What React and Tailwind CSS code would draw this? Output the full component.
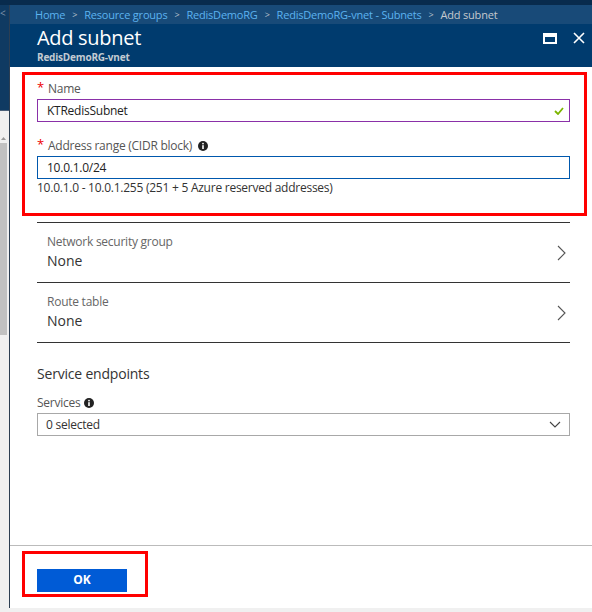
import { useState } from "react";

const font = { fontFamily: '"Open Sans", "Noto Sans", sans-serif' };

function InfoIcon() {
  return (
    <svg width="10" height="10" viewBox="0 0 10 10" className="inline-block">
      <circle cx="5" cy="5" r="5" fill="#222" />
      <rect x="4.2" y="4.2" width="1.6" height="3.8" fill="#fff" />
      <circle cx="5" cy="2.6" r="0.9" fill="#fff" />
    </svg>
  );
}

function Chevron() {
  return (
    <svg width="9" height="16" viewBox="0 0 9 16" fill="none">
      <path d="M1 1 L8 8 L1 15" stroke="#555" strokeWidth="1.1" />
    </svg>
  );
}

function Crumb({ children, last }) {
  return (
    <>
      <span className={last ? "text-[#c4c9ce]" : "text-[#5cb3f0]"}>{children}</span>
      {!last && <span className="text-[#b8c2cc] mx-[7px] text-[9px]">&gt;</span>}
    </>
  );
}

function PickerRow({ label, value }) {
  return (
    <div className="h-[60px] border-t border-[#333] pl-[10px] pr-[4px] flex items-center justify-between">
      <div className="flex flex-col">
        <span className="text-[12px] tracking-[-0.25px] text-[#666] leading-[16px]">{label}</span>
        <span className="text-[14px] text-[#333] leading-[20px] mt-[1px]">{value}</span>
      </div>
      <Chevron />
    </div>
  );
}

export default function App() {
  const [name, setName] = useState("KTRedisSubnet");
  const [range, setRange] = useState("10.0.1.0/24");

  return (
    <div className="w-[592px] h-[612px] flex flex-col bg-[#f0f0f0] overflow-hidden" style={font}>
      <div className="h-[5px] bg-[#082b4d] shrink-0" />
      <div className="flex flex-1 min-h-0">
        {/* left strip of the previous blade */}
        <div className="w-[9px] flex flex-col shrink-0">
          <div className="h-[105px] bg-[#0f3a62] flex flex-col">
            <span className="text-[#7d93a8] text-[10px] leading-none mt-[3px]">&lt;</span>
          </div>
          <div className="h-[1px] bg-[#4a6079]" />
          <div className="flex-1 bg-[#f0f0f0] flex flex-col pt-[24px]">
            <div className="w-[7px] h-[7px] flex items-center justify-center">
              <svg width="5" height="3" viewBox="0 0 5 3"><path d="M0 3 L2.5 0 L5 3Z" fill="#999" /></svg>
            </div>
            <div className="w-[7px] h-[192px] bg-[#c1c1c1] mt-[1px]" />
          </div>
        </div>

        {/* blade */}
        <div className="flex-1 flex flex-col border-l border-[#2c3e52] bg-white min-w-0 mb-[4px]">
          <div className="h-[19px] bg-[#184a78] flex items-center pl-[25px] text-[11px] tracking-[-0.2px] whitespace-nowrap leading-none">
            <Crumb>Home</Crumb>
            <Crumb>Resource groups</Crumb>
            <Crumb>RedisDemoRG</Crumb>
            <Crumb>RedisDemoRG-vnet - Subnets</Crumb>
            <Crumb last>Add subnet</Crumb>
          </div>
          <div className="h-[43px] bg-[#003b6e] flex justify-between pl-[27px] pr-[7px]">
            <div className="flex flex-col">
              <span className="text-white text-[20px] leading-[24px] mt-[2px] font-normal tracking-[-0.3px]">Add subnet</span>
              <span className="text-[#c3cbd3] text-[10px] font-bold leading-[12px] mt-[1px] tracking-[-0.2px]">RedisDemoRG-vnet</span>
            </div>
            <div className="flex items-start gap-[16px] pt-[8px]">
              <svg width="14" height="11" viewBox="0 0 14 11" className="mt-[1px]">
                <rect x="1" y="1" width="12" height="9" fill="none" stroke="#fff" strokeWidth="2" />
                <rect x="1" y="1" width="12" height="3" fill="#fff" />
              </svg>
              <svg width="12" height="12" viewBox="0 0 12 12">
                <path d="M1 1 L11 11 M11 1 L1 11" stroke="#fff" strokeWidth="1.6" />
              </svg>
            </div>
          </div>

          <div className="flex-1 flex flex-col">
            {/* highlighted name / range */}
            <div className="mt-[5px] ml-[12px] mr-[5px] h-[144px] border-[3px] border-[#ff0000] pl-[12px] pr-[14px] pt-[6px]">
              <div className="flex items-start text-[12px] tracking-[-0.25px] leading-[16px]">
                <span className="text-[#e00] text-[13px] leading-[12px] w-[11px]">*</span>
                <span className="text-[#555]">Name</span>
              </div>
              <div className="mt-[2px] h-[23px] border border-[#8a30a8] flex items-center pl-[9px] pr-[5px]">
                <input
                  value={name}
                  onChange={(e) => setName(e.target.value)}
                  className="flex-1 text-[12px] tracking-[-0.25px] text-[#222] outline-none bg-transparent"
                  style={font}
                />
                <svg width="10" height="8" viewBox="0 0 10 8">
                  <path d="M1 4 L4 7 L9 1" stroke="#7cb500" strokeWidth="1.8" fill="none" />
                </svg>
              </div>
              <div className="flex items-center text-[12px] tracking-[-0.25px] leading-[16px] mt-[16px]">
                <span className="text-[#e00] text-[13px] leading-[12px] w-[11px] self-start">*</span>
                <span className="text-[#555] mr-[6px]">Address range (CIDR block)</span>
                <InfoIcon />
              </div>
              <div className="mt-[2px] h-[23px] border border-[#0058ad] flex items-center pl-[9px]">
                <input
                  value={range}
                  onChange={(e) => setRange(e.target.value)}
                  className="flex-1 text-[12px] tracking-[-0.25px] text-[#222] outline-none bg-transparent"
                  style={font}
                />
              </div>
              <div className="text-[12px] tracking-[-0.25px] text-[#333] leading-[16px] mt-[1px]">
                10.0.1.0 - 10.0.1.255 (251 + 5 Azure reserved addresses)
              </div>
            </div>

            <div className="ml-[27px] mr-[22px] mt-[6px]">
              <PickerRow label="Network security group" value="None" />
              <PickerRow label="Route table" value="None" />
              <div className="border-t border-[#333]" />

              <div className="text-[14px] text-[#333] leading-[20px] mt-[21px] tracking-[-0.2px]">Service endpoints</div>
              <div className="flex items-center gap-[4px] text-[12px] tracking-[-0.25px] text-[#555] leading-[16px] mt-[11px]">
                <span>Services</span>
                <InfoIcon />
              </div>
              <div className="mt-[2px] h-[23px] border border-[#a8a8a8] flex items-center justify-between pl-[8px] pr-[8px]">
                <span className="text-[12px] tracking-[-0.25px] text-[#333]">0 selected</span>
                <svg width="12" height="7" viewBox="0 0 12 7" fill="none">
                  <path d="M1 1 L6 6 L11 1" stroke="#444" strokeWidth="1.1" />
                </svg>
              </div>
            </div>
          </div>

          {/* footer */}
          <div className="h-[63px] border-t border-[#bbb] pt-[5px] pl-[12px]">
            <div className="w-[126px] h-[46px] border-[3px] border-[#ff0000] pl-[12px] pt-[12px]">
              <button className="w-[90px] h-[23px] bg-[#005bd6] text-white text-[12px] font-bold" style={font}>
                OK
              </button>
            </div>
          </div>
        </div>
      </div>
    </div>
  );
}
